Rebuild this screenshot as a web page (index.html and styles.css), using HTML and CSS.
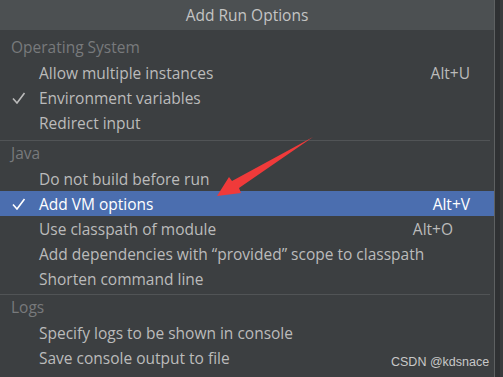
FILE: index.html
```html
<!DOCTYPE html>
<html lang="en">
<head>
    <meta charset="UTF-8">
    <meta name="viewport" content="width=device-width, initial-scale=1.0">
    <title>Add Run Options</title>
    <link rel="stylesheet" href="styles.css">
</head>
<body>
<div class="screen">
    <div class="popup">
        <div class="popup-title">Add Run Options</div>

        <div class="group first">
            <div class="group-label">Operating System</div>
            <div class="option">
                <span class="check"></span>
                <span class="option-name">Allow multiple instances</span>
                <span class="shortcut">Alt+U</span>
            </div>
            <div class="option">
                <span class="check"><svg viewBox="0 0 14 12" width="14" height="12"><polyline points="1,6.5 5,11 12.5,1" /></svg></span>
                <span class="option-name">Environment variables</span>
            </div>
            <div class="option">
                <span class="check"></span>
                <span class="option-name">Redirect input</span>
            </div>
        </div>

        <div class="separator"></div>

        <div class="group">
            <div class="group-label">Java</div>
            <div class="option">
                <span class="check"></span>
                <span class="option-name">Do not build before run</span>
            </div>
            <div class="option selected">
                <span class="check"><svg viewBox="0 0 14 12" width="14" height="12"><polyline points="1,6.5 5,11 12.5,1" /></svg></span>
                <span class="option-name">Add VM options</span>
                <span class="shortcut">Alt+V</span>
            </div>
            <div class="option">
                <span class="check"></span>
                <span class="option-name">Use classpath of module</span>
                <span class="shortcut shifted">Alt+O</span>
            </div>
            <div class="option">
                <span class="check"></span>
                <span class="option-name">Add dependencies with “provided” scope to classpath</span>
            </div>
            <div class="option">
                <span class="check"></span>
                <span class="option-name">Shorten command line</span>
            </div>
        </div>

        <div class="separator tight"></div>

        <div class="group">
            <div class="group-label">Logs</div>
            <div class="option">
                <span class="check"></span>
                <span class="option-name">Specify logs to be shown in console</span>
            </div>
            <div class="option">
                <span class="check"></span>
                <span class="option-name">Save console output to file</span>
            </div>
            <div class="option">
                <span class="check"></span>
                <span class="option-name">Show console when a message is printed to stdout</span>
            </div>
        </div>
    </div>
    <div class="scroll-edge"></div>

    <!-- red annotation arrow drawn over the list -->
    <svg class="annotation" width="503" height="377" viewBox="0 0 503 377">
        <polygon points="217,196 229,177 232,181 313,137 239,188 241,193" />
    </svg>
    <div class="watermark">CSDN @kdsnace</div>
</div>
</body>
</html>
```

FILE: styles.css
```css
body {
    margin: 0;
    padding: 0;
    background-color: #3c3f41;
    font-family: "Open Sans", "Noto Sans", sans-serif;
    font-size: 15.5px;
    color: #bbbbbb;
}
.screen {
    position: relative;
    display: flex;
    width: 503px;
    height: 377px;
    overflow: hidden;
}
.popup {
    width: 494px;
    flex-shrink: 0;
    background-color: #3c3f41;
}
.popup-title {
    height: 30px;
    line-height: 30px;
    text-align: center;
    background-color: #4c5052;
    color: #c4c4c4;
}
.group.first {
    padding-top: 5px;
}
.group-label {
    height: 25px;
    line-height: 25px;
    padding-left: 11px;
    color: #787a7c;
}
.option {
    display: flex;
    align-items: center;
    height: 25px;
    padding-right: 24px;
}
.option.selected {
    background-color: #4b6eaf;
    color: #ffffff;
}
.check {
    width: 39px;
    display: flex;
    justify-content: center;
    padding-right: 2px;
    box-sizing: border-box;
}
.check svg {
    fill: none;
    stroke: #bbbbbb;
    stroke-width: 1.6;
}
.selected .check svg {
    stroke: #ffffff;
}
.option-name {
    flex: 1;
    white-space: nowrap;
}
.shortcut {
    color: #bbbbbb;
}
.selected .shortcut {
    color: #ffffff;
}
.shortcut.shifted {
    margin-right: 17px;
}
.separator {
    height: 1px;
    margin: 5px 4px 0 0;
    background-color: #515456;
}
.separator.tight {
    margin-top: 3px;
}
.scroll-edge {
    flex: 1;
    border-left: 1px solid #5e6162;
    background: linear-gradient(to right, #2f3133 0, #2f3133 5px, #393b3d 5px);
}
.annotation {
    position: absolute;
    left: 0;
    top: 0;
}
.annotation polygon {
    fill: #f03a3a;
}
.watermark {
    position: absolute;
    left: 391px;
    top: 355px;
    font-family: "Liberation Sans", Arial, sans-serif;
    font-size: 12.5px;
    color: #c8c8c8;
}
```
